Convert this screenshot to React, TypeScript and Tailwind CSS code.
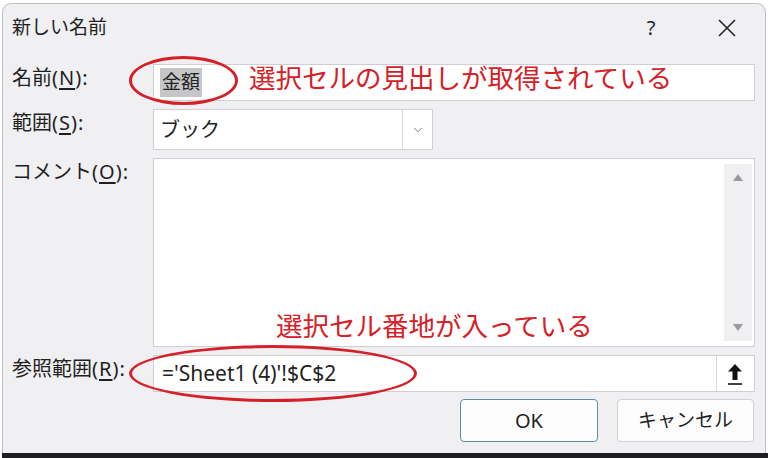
import { ChevronDown } from 'lucide-react';

const FONT = '"Noto Sans", "Noto Sans CJK JP", sans-serif';

function Label({ text, hot }: { text: string; hot: string }) {
  return (
    <div className="pl-[9px] pt-[2px] text-[20px] leading-[24px] text-[#1f1f1f] whitespace-nowrap">
      {text}<span className="tracking-[1px]">(<span className="underline underline-offset-[3px]">{hot}</span>):</span>
    </div>
  );
}

export default function App() {
  return (
    <div className="w-[768px] h-[458px] bg-white overflow-hidden flex flex-col" style={{ fontFamily: FONT }}>
      <div className="pt-[3px] pl-[2px] flex-1 flex flex-col">
        <div className="relative w-[764px] h-[450px] bg-[#f0f0f3] rounded-t-[9px] border border-[#bdbdc2] border-b-0 flex flex-col">
          {/* title bar */}
          <div className="h-[47px] flex items-center pl-[9px] pr-[28px]">
            <div className="text-[19px] text-[#1f1f1f] flex-1">新しい名前</div>
            <div className="text-[20px] text-[#222] w-[20px] text-center mr-[56px]">?</div>
            <svg width="20" height="20" viewBox="0 0 20 20" className="text-[#222]">
              <path d="M2 2L18 18M18 2L2 18" stroke="currentColor" strokeWidth="1.6" />
            </svg>
          </div>

          {/* form */}
          <div className="grid grid-cols-[150px_602px] pr-[10px] mt-[13px] gap-y-[8px]">
            <Label text="名前" hot="N" />
            <div className="h-[37px] bg-white border border-[#cfcfd3] flex items-center pl-[6px]">
              <span className="bg-[#c6c6c8] text-[19px] text-[#222] leading-[29px] px-[2px]">金額</span>
            </div>

            <Label text="範囲" hot="S" />
            <div className="w-[280px] h-[41px] bg-white border border-[#cfcfd3] flex">
              <div className="flex-1 flex items-center pl-[6px] text-[20px] text-[#222]">ブック</div>
              <div className="w-[30px] border-l border-[#d8d8dc] flex items-center justify-center">
                <ChevronDown size={14} strokeWidth={1.5} className="text-[#666]" />
              </div>
            </div>

            <Label text="コメント" hot="O" />
            <div className="h-[189px] bg-white border border-[#cfcfd3] flex justify-end py-[5px] pr-[2px]">
              <div className="w-[28px] bg-[#f0f0f2] flex flex-col items-center justify-between py-[10px]">
                <svg width="10" height="7" viewBox="0 0 10 7"><path d="M5 0L10 7H0Z" fill="#9a9a9e" /></svg>
                <svg width="10" height="7" viewBox="0 0 10 7"><path d="M0 0H10L5 7Z" fill="#9a9a9e" /></svg>
              </div>
            </div>

            <Label text="参照範囲" hot="R" />
            <div className="h-[37px] bg-white border border-[#cfcfd3] flex items-center pl-[8px] pr-[2px]">
              <span className="flex-1 text-[21px] text-[#222]">='Sheet1 (4)'!$C$2</span>
              <div className="w-[36px] h-[35px] border-l border-[#d8d8dc] flex items-center justify-center">
                <svg width="18" height="24" viewBox="0 0 18 24">
                  <path d="M9 2L2 9.5H6.5V18H11.5V9.5H16Z" fill="#111" />
                  <path d="M2 22H16" stroke="#111" strokeWidth="1.6" />
                </svg>
              </div>
            </div>
          </div>

          {/* buttons */}
          <div className="flex justify-end gap-[19px] pr-[11px] mt-[7px]">
            <button className="w-[138px] h-[43px] bg-[#fdfdfd] border border-[#5d8bb0] rounded-[4px] text-[20px] text-[#1f1f1f]">
              OK
            </button>
            <button className="w-[137px] h-[43px] bg-[#fdfdfd] border border-[#d2d2d6] rounded-[4px] text-[19px] text-[#1f1f1f]">
              キャンセル
            </button>
          </div>

          {/* annotations */}
          <div className="absolute left-[126px] top-[52px] w-[109px] h-[49px] rounded-[50%] border-[3px] border-[#d42027]" />
          <div className="absolute left-[246px] top-[57px] text-[26.5px] leading-[34px] text-[#d42027] whitespace-nowrap">
            選択セルの見出しが取得されている
          </div>
          <div className="absolute left-[273px] top-[305px] text-[26.5px] leading-[34px] text-[#d42027] whitespace-nowrap">
            選択セル番地が入っている
          </div>
          <div className="absolute left-[126px] top-[341px] w-[288px] h-[57px] rounded-[50%] border-[3px] border-[#d42027]" />
        </div>
        <div className="h-[5px] bg-[#1e1e20]" />
      </div>
    </div>
  );
}
